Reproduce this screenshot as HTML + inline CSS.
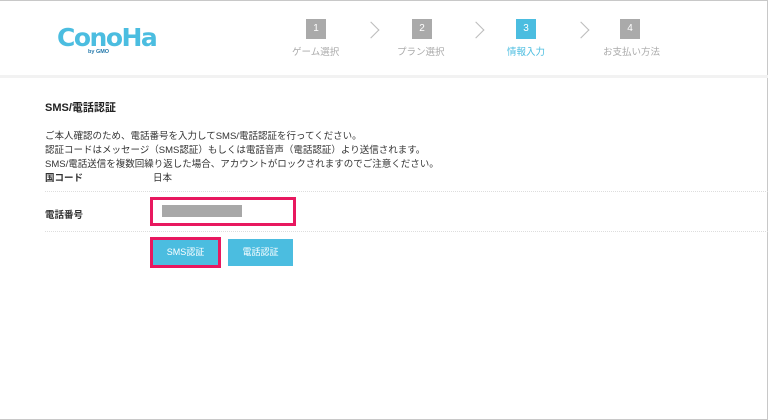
<!DOCTYPE html>
<html><head><meta charset="utf-8"><style>
*{margin:0;padding:0;box-sizing:border-box}
body{width:768px;height:420px;background:#fff;font-family:"Liberation Sans","Noto Sans CJK JP",sans-serif;position:relative;overflow:hidden;border:1px solid #c8c8c8;border-left:none}
.a{position:absolute;white-space:nowrap}
.box{position:absolute;width:20px;height:20px;background:#aaa;color:#fff;font-size:10px;text-align:center;line-height:20px;top:18px}
.lbl{position:absolute;top:43px;font-size:9.5px;color:#aaa}
.chev{position:absolute;top:23px;width:12px;height:12px;border-top:1px solid #bbb;border-right:1px solid #bbb;transform:rotate(45deg)}
.t{font-size:9.5px;color:#333}
</style></head><body>
<div class="a" style="left:57px;top:22px;font-size:25px;color:#4bbde0;font-weight:bold;letter-spacing:-1.5px;font-family:'DejaVu Sans',sans-serif">ConoHa</div>
<div class="a" style="left:88px;top:48px;font-size:5.5px;color:#27a;font-weight:bold">by GMO</div>
<div class="box" style="left:306px">1</div><div class="lbl" style="left:292px">ゲーム選択</div>
<div class="chev" style="left:365px"></div>
<div class="box" style="left:412px">2</div><div class="lbl" style="left:397px">プラン選択</div>
<div class="chev" style="left:470px"></div>
<div class="box" style="left:516px;background:#4bbde0">3</div><div class="lbl" style="left:507px;color:#4bbde0">情報入力</div>
<div class="chev" style="left:575px"></div>
<div class="box" style="left:620px">4</div><div class="lbl" style="left:603px">お支払い方法</div>
<div class="a" style="left:0;top:74px;width:768px;height:3px;background:#f2f2f2"></div>
<div class="a" style="left:45px;top:98px;font-size:11px;font-weight:bold;color:#222">SMS/電話認証</div>
<div class="a t" style="left:45px;top:127px">ご本人確認のため、電話番号を入力してSMS/電話認証を行ってください。</div>
<div class="a t" style="left:45px;top:141px">認証コードはメッセージ（SMS認証）もしくは電話音声（電話認証）より送信されます。</div>
<div class="a t" style="left:45px;top:155px">SMS/電話送信を複数回繰り返した場合、アカウントがロックされますのでご注意ください。</div>
<div class="a t" style="left:45px;top:169px;font-weight:bold">国コード</div>
<div class="a t" style="left:153px;top:169px">日本</div>
<div class="a" style="left:45px;top:190px;width:723px;border-top:1px dotted #ddd"></div>
<div class="a t" style="left:45px;top:206px;font-weight:bold">電話番号</div>
<div class="a" style="left:150px;top:196px;width:146px;height:29px;border:3px solid #e8185f;background:#fff"></div>
<div class="a" style="left:162px;top:204px;width:80px;height:12px;background:#a8a8a8"></div>
<div class="a" style="left:45px;top:230px;width:723px;border-top:1px dotted #ddd"></div>
<div class="a" style="left:150px;top:236px;width:71px;height:31px;border:3px solid #e8185f;background:#4bbde0;color:#fff;font-size:9px;text-align:center;line-height:25px">SMS認証</div>
<div class="a" style="left:228px;top:238px;width:65px;height:27px;background:#4bbde0;color:#fff;font-size:9px;text-align:center;line-height:27px">電話認証</div>
</body></html>
